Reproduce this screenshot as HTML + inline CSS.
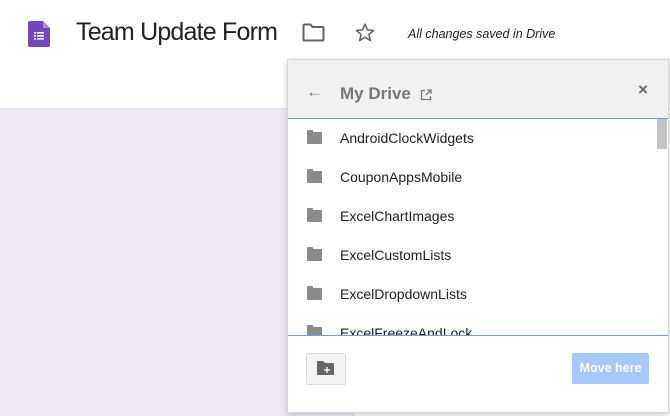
<html><head><style>
body{margin:0;width:670px;height:416px;overflow:hidden;background:#fff;font-family:"Liberation Sans",sans-serif;position:relative}
.a{position:absolute}
.row{position:absolute;left:0;height:39px;width:368px}
.row .f{position:absolute;left:19px;top:13px;width:15px;height:12px;background:#8a8a8a;border-radius:1px}
.row .f:before{content:"";position:absolute;left:0;top:-2px;width:6px;height:3px;background:#8a8a8a;border-radius:1px 1px 0 0}
.row span{position:absolute;left:52px;top:11px;font-size:14px;color:#202124}
</style></head><body>
<div class="a" style="left:0;top:110px;width:670px;height:306px;background:#ede9f7"></div>
<div class="a" style="left:355px;top:110px;width:315px;height:306px;background:#fff"></div>
<div class="a" style="left:0;top:108px;width:670px;height:2px;background:#e6e6e6"></div>
<svg class="a" style="left:28px;top:21px" width="22" height="26" viewBox="0 0 22 26"><path d="M2 0h13l7 7v17a2 2 0 0 1-2 2H2a2 2 0 0 1-2-2V2a2 2 0 0 1 2-2z" fill="#7248b9"/><path d="M15 0l7 7h-7z" fill="#a98ad8"/><g fill="#fff"><rect x="6" y="11" width="2" height="1.6"/><rect x="9" y="11" width="7" height="1.6"/><rect x="6" y="14" width="2" height="1.6"/><rect x="9" y="14" width="7" height="1.6"/><rect x="6" y="17" width="2" height="1.6"/><rect x="9" y="17" width="7" height="1.6"/></g></svg>
<div class="a" style="left:76px;top:18px;font-size:25px;letter-spacing:-0.8px;color:#202124">Team Update Form</div>
<svg class="a" style="left:302px;top:23px" width="23" height="19" viewBox="0 0 23 19"><path d="M1.5 2.5a1 1 0 0 1 1-1h6l2 2.5h10a1 1 0 0 1 1 1v11.5a1 1 0 0 1-1 1h-18a1 1 0 0 1-1-1z" fill="none" stroke="#5f6368" stroke-width="2"/></svg>
<svg class="a" style="left:354px;top:22px" width="22" height="21" viewBox="0 0 24 24"><path d="M12 2.5l2.8 6.5 7 .6-5.3 4.6 1.6 6.9L12 17.5l-6.1 3.6 1.6-6.9L2.2 9.6l7-.6z" fill="none" stroke="#5f6368" stroke-width="1.8" stroke-linejoin="round"/></svg>
<div class="a" style="left:408px;top:27px;font-size:12.5px;font-style:italic;color:#202124">All changes saved in Drive</div>
<div class="a" style="left:287px;top:59px;width:380px;height:352px;background:#fff;border:1px solid #d6d6d6;box-shadow:0 2px 6px rgba(0,0,0,.2)">
 <div class="a" style="left:0;top:0;width:380px;height:58px;background:#f1f1f1;border-bottom:1px solid #6a9fe6"></div>
 <div class="a" style="left:18px;top:22px;font-size:17px;color:#777">←</div>
 <div class="a" style="left:52px;top:24px;font-size:17px;font-weight:bold;color:#777">My Drive</div>
 <svg class="a" style="left:132px;top:29px" width="12" height="12" viewBox="0 0 12 12"><path d="M5 1.5H1.5v9h9V7M7 1h4v4M11 1L6 6" fill="none" stroke="#777" stroke-width="1.3"/></svg>
 <div class="a" style="left:350px;top:20px;font-size:17px;font-weight:bold;color:#666">×</div>
 <div class="a" style="left:0;top:59px;width:380px;height:216px;overflow:hidden">
  <div class="row" style="top:0"><div class="f"></div><span>AndroidClockWidgets</span></div>
  <div class="row" style="top:39px"><div class="f"></div><span>CouponAppsMobile</span></div>
  <div class="row" style="top:78px"><div class="f"></div><span>ExcelChartImages</span></div>
  <div class="row" style="top:117px"><div class="f"></div><span>ExcelCustomLists</span></div>
  <div class="row" style="top:156px"><div class="f"></div><span>ExcelDropdownLists</span></div>
  <div class="row" style="top:195px"><div class="f"></div><span>ExcelFreezeAndLock</span></div>
  <div class="a" style="left:369px;top:0;width:10px;height:30px;background:#c4c4c4"></div>
 </div>
 <div class="a" style="left:0;top:275px;width:380px;height:1px;background:#6a9fe6"></div>
 <div class="a" style="left:18px;top:293px;width:38px;height:30px;background:#f4f4f4;border:1px solid #dadada;border-radius:2px"></div>
 <svg class="a" style="left:29px;top:300px" width="17" height="16" viewBox="0 0 17 16"><path d="M0 2a1 1 0 0 1 1-1h5l2 2h8a1 1 0 0 1 1 1v11H0z" fill="#666"/><path d="M10 7v6M7 10h6" stroke="#fff" stroke-width="1.3"/></svg>
 <div class="a" style="left:284px;top:293px;width:77px;height:31px;background:#a6c8fa;border-radius:2px;color:#fff;font-size:12.5px;font-weight:bold;line-height:31px;text-align:center">Move here</div>
</div>
</body></html>
